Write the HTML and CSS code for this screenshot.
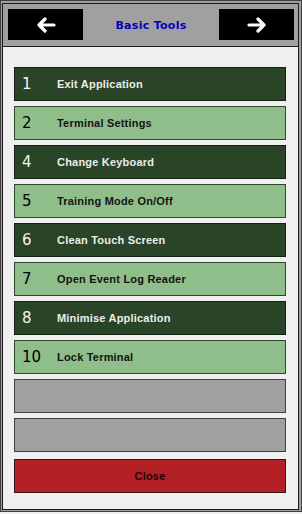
FILE: index.html
```html
<!DOCTYPE html>
<html lang="en">
<head>
  <meta charset="UTF-8">
  <title>Basic Tools</title>
  <link rel="stylesheet" href="styles.css">
</head>
<body>
  <div class="frame">
    <div class="panel">
      <div class="header">
        <div class="nav-btn">
          <svg width="20" height="16" viewBox="0 0 20 16">
            <path d="M18 8H3M9 2L3 8l6 6" fill="none" stroke="#fff" stroke-width="3.2" stroke-linecap="round" stroke-linejoin="round"/>
          </svg>
        </div>
        <div class="title">Basic Tools</div>
        <div class="nav-btn">
          <svg width="20" height="16" viewBox="0 0 20 16">
            <path d="M2 8h15M11 2l6 6-6 6" fill="none" stroke="#fff" stroke-width="3.2" stroke-linecap="round" stroke-linejoin="round"/>
          </svg>
        </div>
      </div>

      <div class="menu">
        <div class="item dark"><span class="num">1</span><span class="label">Exit Application</span></div>
        <div class="item light"><span class="num">2</span><span class="label">Terminal Settings</span></div>
        <div class="item dark"><span class="num">4</span><span class="label">Change Keyboard</span></div>
        <div class="item light"><span class="num">5</span><span class="label">Training Mode On/Off</span></div>
        <div class="item dark"><span class="num">6</span><span class="label">Clean Touch Screen</span></div>
        <div class="item light"><span class="num">7</span><span class="label">Open Event Log Reader</span></div>
        <div class="item dark"><span class="num">8</span><span class="label">Minimise Application</span></div>
        <div class="item light"><span class="num">10</span><span class="label">Lock Terminal</span></div>
        <div class="item empty"></div>
        <div class="item empty"></div>
        <div class="item close">Close</div>
      </div>
    </div>
  </div>
</body>
</html>
```

FILE: styles.css
```css
html, body {
  margin: 0;
  background: #f0f0f0;
}
.frame {
  box-sizing: border-box;
  width: 302px;
  height: 512px;
  border: 1px solid #404040;
  background: #a0a0a0;
  padding: 2px 2px 1px 1px;
}
.panel {
  box-sizing: border-box;
  height: 100%;
  border: 1px solid #1a1a1a;
  background: #f0f0f0;
}
.header {
  display: flex;
  justify-content: space-between;
  align-items: flex-start;
  height: 43px;
  padding: 5px 4px 0 5px;
  box-sizing: border-box;
  background: #a0a0a0;
  border-bottom: 1px solid #1a1a1a;
}
.nav-btn {
  width: 75px;
  height: 31px;
  background: #000;
  display: flex;
  align-items: center;
  justify-content: center;
}
.title {
  align-self: center;
  margin-top: -4px;
  font-family: "DejaVu Sans", sans-serif;
  font-weight: bold;
  font-size: 11px;
  letter-spacing: 0.3px;
  color: #0000c0;
}
.menu {
  display: flex;
  flex-direction: column;
  gap: 5px;
  padding: 20px 12px 0 11px;
}
.item {
  box-sizing: border-box;
  height: 34px;
  border: 1px solid #1a1a1a;
  display: flex;
  align-items: center;
  font-family: "Liberation Sans", Arial, sans-serif;
  font-weight: bold;
  font-size: 11px;
  letter-spacing: 0.2px;
}
.item .num {
  width: 42px;
  padding-left: 7px;
  box-sizing: border-box;
  font-family: "DejaVu Sans", sans-serif;
  font-weight: normal;
  font-size: 15px;
  letter-spacing: 0;
}
.dark {
  background: #2a4428;
  border-color: #142214;
  color: #ececec;
}
.dark .num {
  color: #f4f4f4;
}
.light {
  background: #8fbe8a;
  border-color: #2c4a2a;
  color: #141414;
}
.light .num {
  color: #000;
}
.empty {
  background: #a0a0a0;
  border-color: #404040;
}
.close {
  margin-top: 2px;
  justify-content: center;
  background: #b22024;
  border-color: #3a1212;
  color: #1a0808;
}
```
